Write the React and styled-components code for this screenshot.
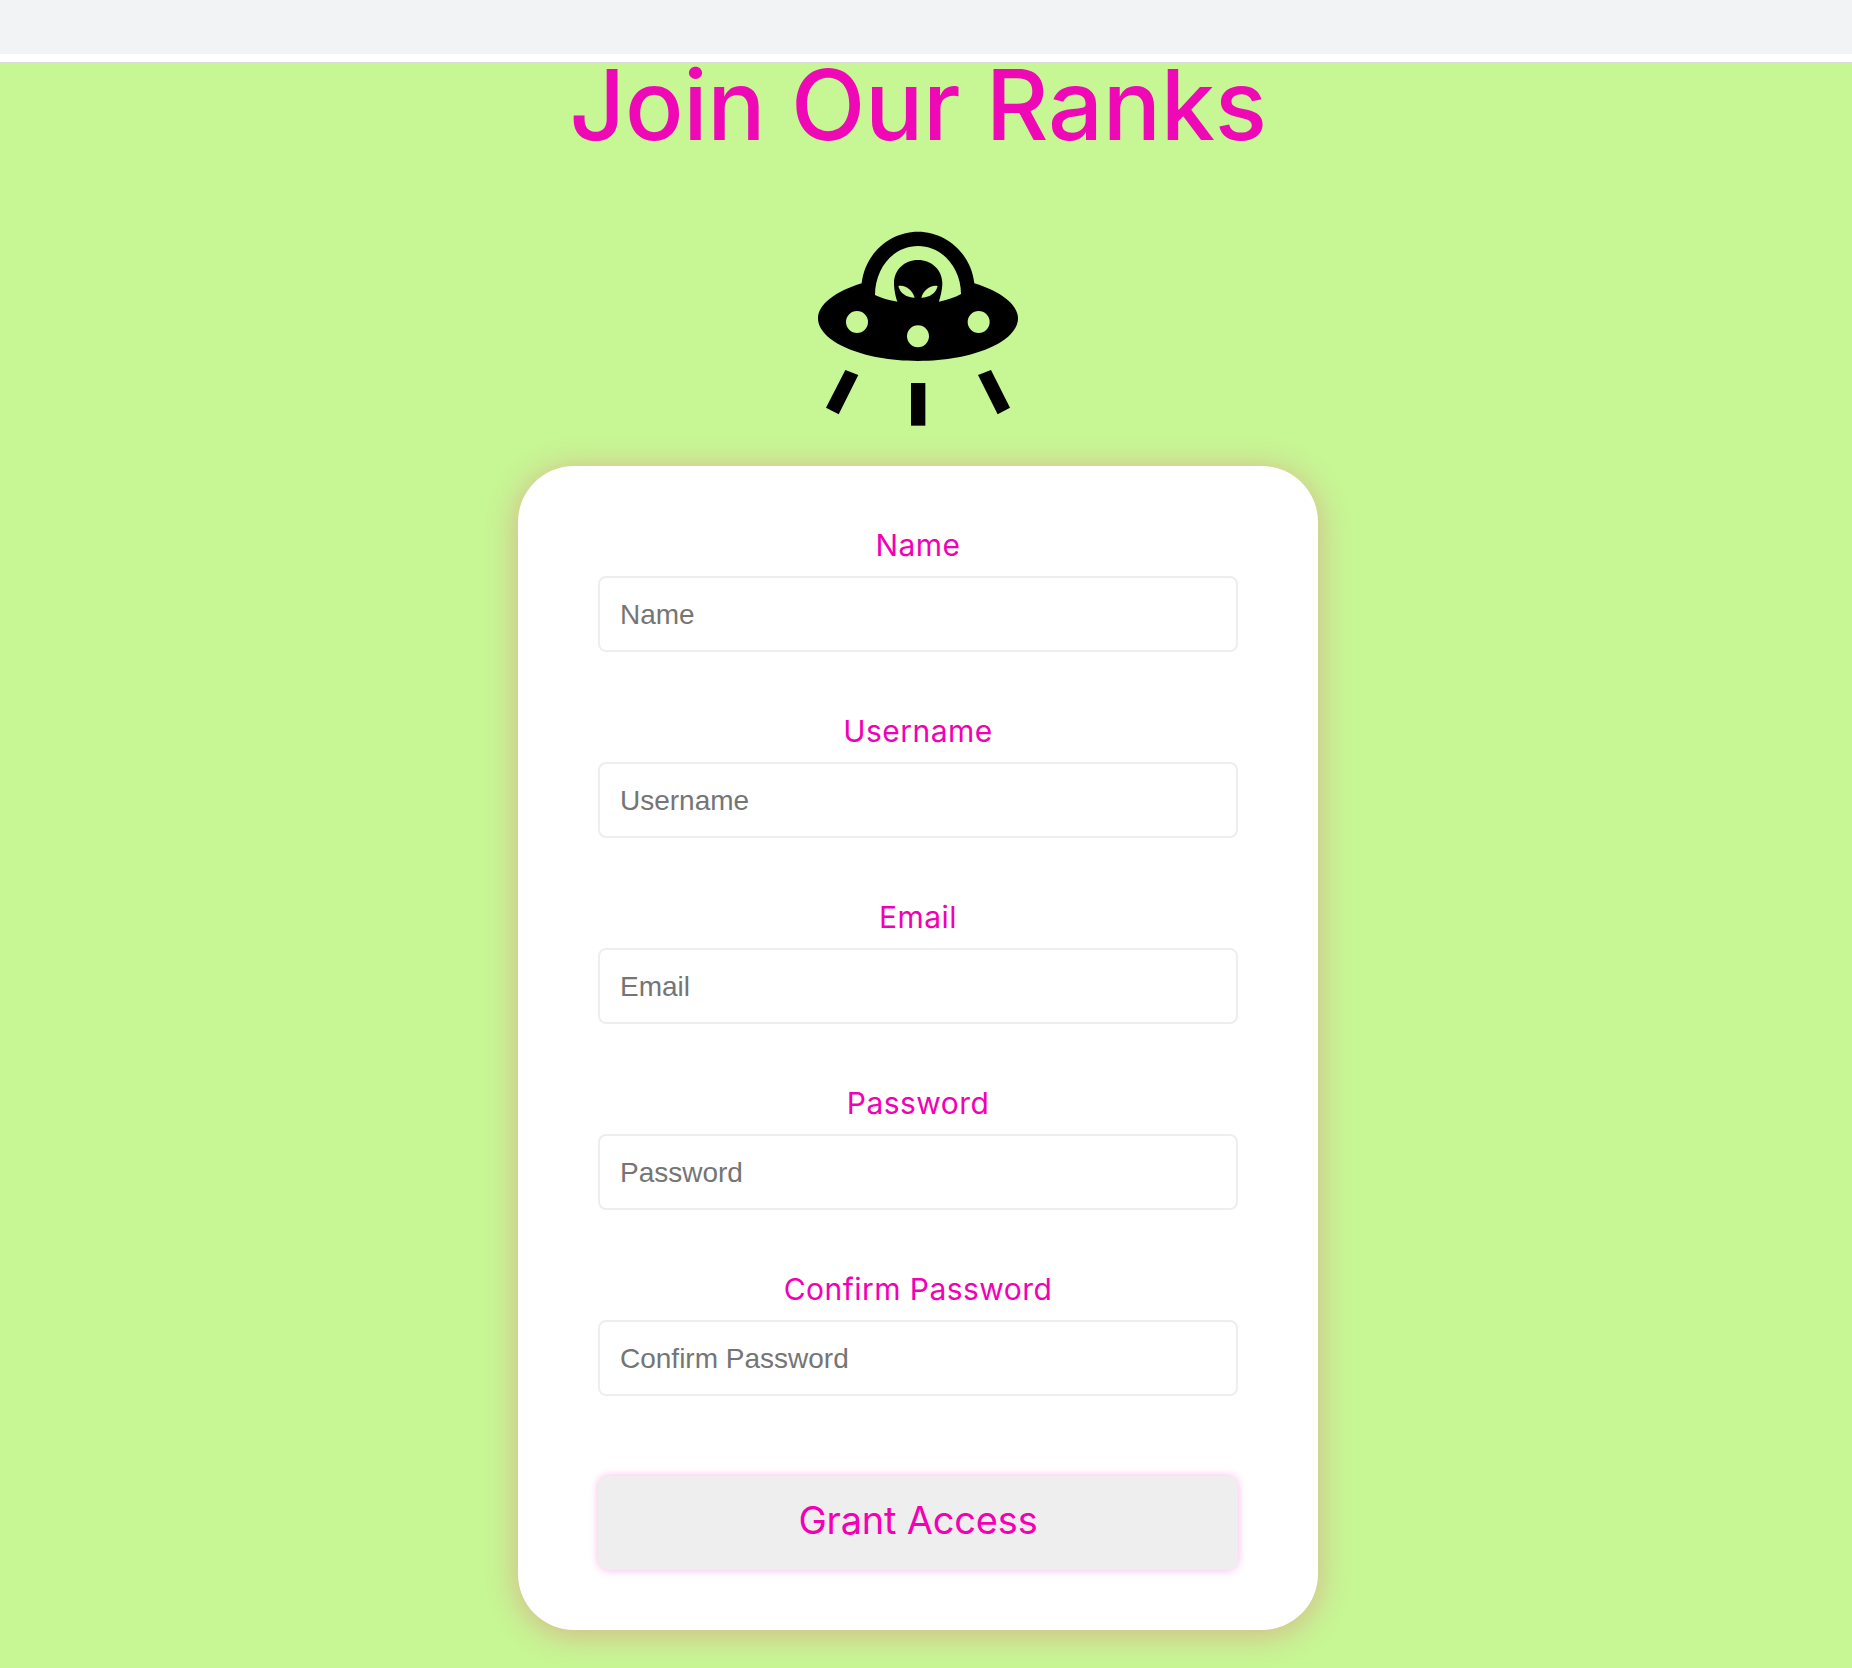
import React from 'react'
import styled, { createGlobalStyle } from 'styled-components'

const GlobalStyle = createGlobalStyle`
  * {
    box-sizing: border-box;
  }
  body {
    margin: 0;
    background: #ffffff;
    font-family: 'Inter', 'Liberation Sans', sans-serif;
  }
`

const TopBar = styled.div`
  height: 54px;
  background-color: #f1f3f5;
  margin-bottom: 8px;
`

const Page = styled.main`
  height: 1606px;
  border-top: 1px solid #dcdcdc;
  background-color: #c7f695;
  padding-right: 16px;
  display: flex;
  flex-direction: column;
  align-items: center;
`

const Title = styled.h1`
  margin: 0;
  height: 152px;
  color: #ee08b6;
  font-family: 'Inter', sans-serif;
  font-size: 97px;
  font-weight: 500;
  line-height: 84px;
  letter-spacing: -0.3px;
  white-space: nowrap;
`

const Saucer = styled.svg`
  display: block;
  width: 260px;
  height: 225px;
  margin-bottom: 26px;
`

const Card = styled.form`
  width: 800px;
  height: 1164px;
  padding: 61px 80px 60px;
  background-color: #ffffff;
  border-radius: 56px;
  box-shadow: 0 4px 32px rgba(255, 0, 100, 0.27);
  display: flex;
  flex-direction: column;
  gap: 61px;
`

const Field = styled.div`
  display: flex;
  flex-direction: column;
  gap: 13px;
`

const Label = styled.label`
  height: 36px;
  color: #f400b4;
  font-size: 30px;
  line-height: 36px;
  letter-spacing: 0.45px;
  text-align: center;
`

const Input = styled.input`
  width: 100%;
  height: 76px;
  padding: 1px 20px 0;
  background: #ffffff;
  border: 2px solid #eeeeee;
  border-radius: 8px;
  font-family: 'Liberation Sans', Arial, sans-serif;
  font-size: 28px;
  outline: none;

  &::placeholder {
    color: #757575;
    opacity: 1;
  }
`

const Submit = styled.button`
  height: 94px;
  margin-top: 19px;
  background-color: #eeeeee;
  border: none;
  border-radius: 10px;
  box-shadow: 0 0 8px rgba(255, 0, 190, 0.3);
  color: #f400b4;
  font-family: 'Inter', sans-serif;
  font-size: 38px;
  letter-spacing: -0.2px;
  padding: 0 0 6px;
  cursor: pointer;
`

const fields = ['Name', 'Username', 'Email', 'Password', 'Confirm Password']

const UfoIcon = () => (
  <Saucer viewBox="-6 0 780 675">
    <path
      fillRule="evenodd"
      d="M215 205 C225 115 300 50 384 50 C468 50 543 115 553 205 C630 228 684 268 684 310 C684 380 550 438 384 438 C218 438 84 380 84 310 C84 268 138 228 215 205 Z
      M255 240 C255 160 310 93 384 93 C458 93 513 160 513 237 C495 247 470 256 447 260 C450 250 457 225 457 205 C457 165 425 135 384 135 C343 135 312 165 312 205 C312 225 318 250 322 260 C298 256 272 249 255 240 Z
      M325 213 C345 208 368 225 374 248 C350 248 330 235 325 213 Z
      M443 213 C423 208 400 225 394 248 C418 248 438 235 443 213 Z
      M168 321 a33 33 0 1 0 66 0 a33 33 0 1 0 -66 0 Z
      M351 364 a33 33 0 1 0 66 0 a33 33 0 1 0 -66 0 Z
      M533 321 a33 33 0 1 0 66 0 a33 33 0 1 0 -66 0 Z"
    />
    <path d="M166 465 L205 480 L146 598 L108 578 Z" />
    <path d="M363 504 H406 V632 H363 Z" />
    <path d="M603 465 L564 480 L623 598 L660 578 Z" />
  </Saucer>
)

export default function App() {
  return (
    <>
      <GlobalStyle />
      <TopBar />
      <Page>
        <Title>Join Our Ranks</Title>
        <UfoIcon />
        <Card onSubmit={e => e.preventDefault()}>
          {fields.map(field => (
            <Field key={field}>
              <Label htmlFor={field}>{field}</Label>
              <Input id={field} placeholder={field} />
            </Field>
          ))}
          <Submit type="submit">Grant Access</Submit>
        </Card>
      </Page>
    </>
  )
}
